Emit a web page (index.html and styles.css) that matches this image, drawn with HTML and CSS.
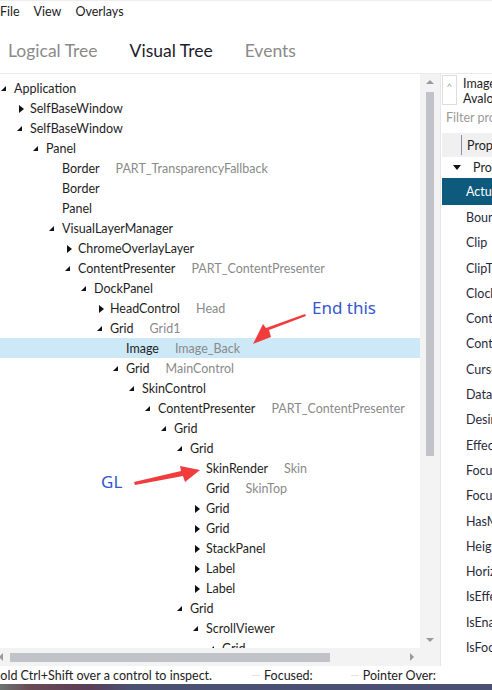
FILE: index.html
```html
<!DOCTYPE html>
<html>
<head>
    <meta charset="UTF-8">
    <title>DevTools</title>
    <link rel="stylesheet" href="styles.css">
</head>
<body>
    <div class="window">
        <div class="menu">
            <span>File</span>
            <span>View</span>
            <span>Overlays</span>
        </div>
        <div class="tabs">
            <span class="tab">Logical Tree</span>
            <span class="tab active">Visual Tree</span>
            <span class="tab">Events</span>
        </div>
        <div class="content">
            <div class="left">
                <div class="tree-area">
                    <div class="tree">
                        <div class="row"><i class="open"></i><span class="type">Application</span></div>
                        <div class="row lv1"><i class="shut"></i><span class="type">SelfBaseWindow</span></div>
                        <div class="row lv1"><i class="open"></i><span class="type">SelfBaseWindow</span></div>
                        <div class="row lv2"><i class="open"></i><span class="type">Panel</span></div>
                        <div class="row lv3"><i></i><span class="type">Border</span><span class="name">PART_TransparencyFallback</span></div>
                        <div class="row lv3"><i></i><span class="type">Border</span></div>
                        <div class="row lv3"><i></i><span class="type">Panel</span></div>
                        <div class="row lv3"><i class="open"></i><span class="type">VisualLayerManager</span></div>
                        <div class="row lv4"><i class="shut"></i><span class="type">ChromeOverlayLayer</span></div>
                        <div class="row lv4"><i class="open"></i><span class="type">ContentPresenter</span><span class="name">PART_ContentPresenter</span></div>
                        <div class="row lv5"><i class="open"></i><span class="type">DockPanel</span></div>
                        <div class="row lv6"><i class="shut"></i><span class="type">HeadControl</span><span class="name">Head</span></div>
                        <div class="row lv6"><i class="open"></i><span class="type">Grid</span><span class="name">Grid1</span></div>
                        <div class="row lv7 selected"><i></i><span class="type">Image</span><span class="name">Image_Back</span></div>
                        <div class="row lv7"><i class="open"></i><span class="type">Grid</span><span class="name">MainControl</span></div>
                        <div class="row lv8"><i class="open"></i><span class="type">SkinControl</span></div>
                        <div class="row lv9"><i class="open"></i><span class="type">ContentPresenter</span><span class="name">PART_ContentPresenter</span></div>
                        <div class="row lv10"><i class="open"></i><span class="type">Grid</span></div>
                        <div class="row lv11"><i class="open"></i><span class="type">Grid</span></div>
                        <div class="row lv12"><i></i><span class="type">SkinRender</span><span class="name">Skin</span></div>
                        <div class="row lv12"><i></i><span class="type">Grid</span><span class="name">SkinTop</span></div>
                        <div class="row lv12"><i class="shut"></i><span class="type">Grid</span></div>
                        <div class="row lv12"><i class="shut"></i><span class="type">Grid</span></div>
                        <div class="row lv12"><i class="shut"></i><span class="type">StackPanel</span></div>
                        <div class="row lv12"><i class="shut"></i><span class="type">Label</span></div>
                        <div class="row lv12"><i class="shut"></i><span class="type">Label</span></div>
                        <div class="row lv11"><i class="open"></i><span class="type">Grid</span></div>
                        <div class="row lv12"><i class="open"></i><span class="type">ScrollViewer</span></div>
                        <div class="row lv13"><i class="open"></i><span class="type">Grid</span></div>
                    </div>
                    <div class="vscroll">
                        <span class="arrow-up"></span>
                        <div class="vthumb"></div>
                        <span class="arrow-down"></span>
                    </div>
                </div>
                <div class="hscroll-row">
                    <div class="hscroll">
                        <span class="arrow-left"></span>
                        <div class="hthumb"></div>
                        <span class="arrow-right"></span>
                    </div>
                    <div class="corner"></div>
                </div>
            </div>
            <div class="props">
                <div class="props-head">
                    <div class="collapse-box">^</div>
                    <div class="props-title">
                        <div>Image</div>
                        <div>Avalonia.Controls.Image</div>
                    </div>
                </div>
                <div class="filter">Filter properties</div>
                <div class="grid-head"><span class="col-line"></span>Property</div>
                <div class="group"><span class="group-arrow"></span>Properties</div>
                <div class="prop selected">ActualThemeVariant</div>
                <div class="prop">Bounds</div>
                <div class="prop">Clip</div>
                <div class="prop">ClipToBounds</div>
                <div class="prop">Clock</div>
                <div class="prop">ContextFlyout</div>
                <div class="prop">ContextMenu</div>
                <div class="prop">Cursor</div>
                <div class="prop">DataContext</div>
                <div class="prop">DesiredSize</div>
                <div class="prop">Effect</div>
                <div class="prop">Focusable</div>
                <div class="prop">FocusAdorner</div>
                <div class="prop">HasMirrorTransform</div>
                <div class="prop">Height</div>
                <div class="prop">HorizontalAlignment</div>
                <div class="prop">IsEffectivelyEnabled</div>
                <div class="prop">IsEnabled</div>
                <div class="prop">IsFocused</div>
                <div class="prop">IsHitTestVisible</div>
            </div>
        </div>
        <div class="status">
            <span class="hint">Hold Ctrl+Shift over a control to inspect.</span>
            <span class="sep first"></span>
            <span class="focused">Focused:</span>
            <span class="sep"></span>
            <span>Pointer Over:</span>
        </div>
        <div class="backdrop"></div>
    </div>

    <!-- annotations drawn on top of the screenshot -->
    <div class="note note-end">End this</div>
    <div class="note note-gl">GL</div>
    <svg class="marks" width="492" height="690" viewBox="0 0 492 690">
        <polygon fill="#f03c3c" points="306,316 269,330 271,337 253,344 263,324 266,328 305,314"/>
        <polygon fill="#f03c3c" points="134,482 181,471 180,466 200,470 185,482 183,476 135,485"/>
    </svg>
</body>
</html>
```

FILE: styles.css
```css
body {
    margin: 0;
    padding: 0;
    background-color: #FFFFFF;
    font-family: "Lato", "Noto Sans", sans-serif;
    font-size: 12.5px;
    color: #1E1E1E;
    width: 492px;
    height: 690px;
    overflow: hidden;
}

.window {
    display: flex;
    flex-direction: column;
    height: 690px;
}

.menu {
    height: 20px;
    border-top: 1px solid #EEEEEE;
    display: flex;
    align-items: center;
    gap: 14px;
    color: #222222;
}

.tabs {
    height: 53px;
    border-bottom: 1px solid #EAEAEA;
    display: flex;
    align-items: center;
    gap: 32px;
    padding-left: 8px;
    padding-top: 6px;
    box-sizing: border-box;
}

.tab {
    font-size: 17.5px;
    color: #8A8A8A;
}

.tab.active {
    color: #1C1C2C;
}

.content {
    display: flex;
    height: 592px;
}

.left {
    width: 440px;
    flex: none;
    display: flex;
    flex-direction: column;
    border-right: 1px solid #E6E6E6;
}

.tree-area {
    display: flex;
    height: 574px;
}

.tree {
    width: 420px;
    overflow: hidden;
    padding-top: 4px;
    box-sizing: border-box;
}

.row {
    height: 20px;
    display: flex;
    align-items: center;
    white-space: nowrap;
}

.row.selected {
    background-color: #CDE8F7;
}

.row i {
    width: 14px;
    height: 20px;
    flex: none;
    position: relative;
}

.row i.open::before {
    content: "";
    position: absolute;
    left: 1px;
    top: 8px;
    border-style: solid;
    border-width: 0 0 5px 5px;
    border-color: transparent transparent #111111 transparent;
}

.row i.shut::before {
    content: "";
    position: absolute;
    left: 3px;
    top: 7px;
    border-style: solid;
    border-width: 4px 0 4px 5px;
    border-color: transparent transparent transparent #111111;
}

.name {
    margin-left: 16px;
    color: #8A8A8A;
}

.lv1 { padding-left: 16px; }
.lv2 { padding-left: 32px; }
.lv3 { padding-left: 48px; }
.lv4 { padding-left: 64px; }
.lv5 { padding-left: 80px; }
.lv6 { padding-left: 96px; }
.lv7 { padding-left: 112px; }
.lv8 { padding-left: 128px; }
.lv9 { padding-left: 144px; }
.lv10 { padding-left: 160px; }
.lv11 { padding-left: 176px; }
.lv12 { padding-left: 192px; }
.lv13 { padding-left: 208px; }

.vscroll {
    width: 20px;
    background-color: #F3F3F3;
    display: flex;
    flex-direction: column;
    align-items: center;
}

.arrow-up {
    margin-top: 6px;
    border-style: solid;
    border-width: 0 4px 4px 4px;
    border-color: transparent transparent #9A9A9A transparent;
}

.vthumb {
    margin-top: 8px;
    width: 8px;
    height: 364px;
    background-color: #C2C3C8;
}

.arrow-down {
    margin-top: auto;
    margin-bottom: 6px;
    border-style: solid;
    border-width: 4px 4px 0 4px;
    border-color: #9A9A9A transparent transparent transparent;
}

.hscroll-row {
    display: flex;
    height: 18px;
}

.hscroll {
    width: 420px;
    background-color: #F3F3F3;
    display: flex;
    align-items: center;
}

.arrow-left {
    margin-left: -1px;
    border-style: solid;
    border-width: 4px 4px 4px 0;
    border-color: transparent #9A9A9A transparent transparent;
}

.hthumb {
    margin-left: 7px;
    width: 320px;
    height: 9px;
    background-color: #C2C3C8;
}

.arrow-right {
    margin-left: auto;
    margin-right: 6px;
    border-style: solid;
    border-width: 4px 0 4px 4px;
    border-color: transparent transparent transparent #9A9A9A;
}

.corner {
    width: 20px;
    background-color: #F3F3F3;
}

.status {
    height: 18px;
    display: flex;
    align-items: center;
    white-space: nowrap;
    color: #222222;
}

.hint {
    margin-left: -9px;
}

.sep {
    width: 8px;
    height: 1px;
    background-color: #E4E4E4;
    margin: 0 4px 0 38px;
}

.sep.first {
    margin-left: 40px;
}

.props {
    flex: 1;
    min-width: 0;
    overflow: hidden;
    white-space: nowrap;
    padding-left: 1px;
}

.props-head {
    display: flex;
    height: 31px;
    padding-top: 1px;
    box-sizing: border-box;
}

.collapse-box {
    width: 13px;
    flex: none;
    border: 1px solid #DDDDDD;
    color: #A0A0A0;
    font-size: 10px;
    text-align: center;
    line-height: 20px;
}

.props-title {
    margin-left: 6px;
    line-height: 15px;
    padding-top: 1px;
}

.filter {
    height: 26px;
    line-height: 26px;
    padding-left: 4px;
    color: #9A9A9A;
}

.grid-head {
    height: 24px;
    background-color: #F0F0F0;
    display: flex;
    align-items: center;
    margin-top: 2px;
}

.col-line {
    width: 1px;
    height: 20px;
    flex: none;
    background-color: #8E8EA2;
    margin: 0 5px 0 19px;
}

.group {
    height: 21px;
    display: flex;
    align-items: center;
}

.group-arrow {
    flex: none;
    margin: 0 12px 0 11px;
    border-style: solid;
    border-width: 5px 4px 0 4px;
    border-color: #111111 transparent transparent transparent;
}

.prop {
    height: 25.3px;
    line-height: 25.3px;
    padding-left: 24px;
    color: #2A2A3C;
}

.prop.selected {
    height: 27px;
    line-height: 27px;
    background-color: #0E5A7C;
    color: #FFFFFF;
}

.backdrop {
    flex: 1;
    background: linear-gradient(90deg, #6C7570 0px, #6A4A55 30px, #5A3E58 90px, #4B5173 130px, #4A5074 100%);
}

.note {
    position: absolute;
    color: #3457D0;
    font-size: 17px;
    font-family: "Noto Sans", sans-serif;
}

.note-end {
    left: 312px;
    top: 296px;
}

.note-gl {
    left: 101px;
    top: 470px;
}

.marks {
    position: absolute;
    left: 0;
    top: 0;
}
```
